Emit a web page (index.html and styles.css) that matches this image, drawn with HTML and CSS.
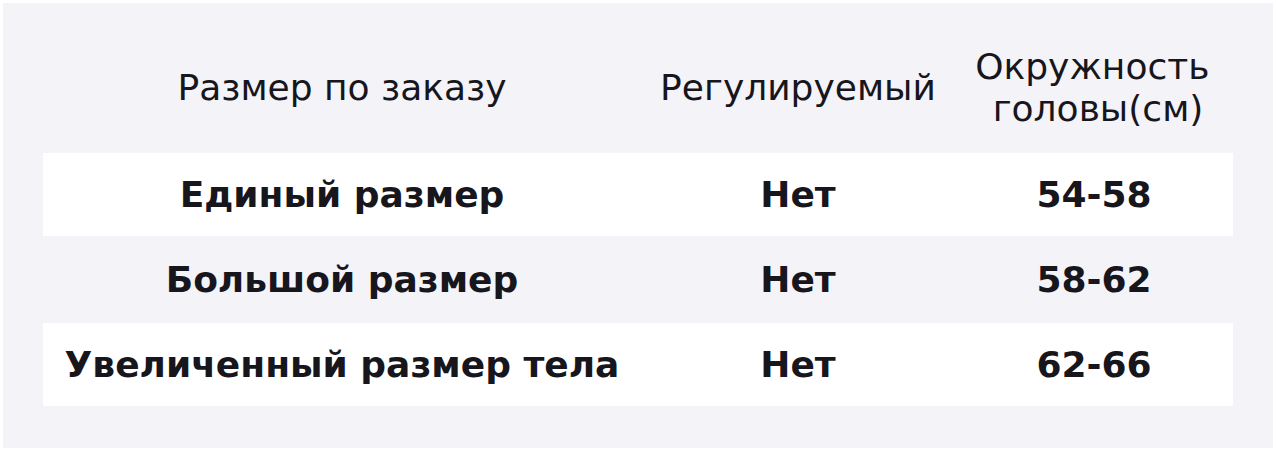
FILE: index.html
```html
<!DOCTYPE html>
<html lang="ru">
<head>
<meta charset="utf-8">
<link rel="stylesheet" href="styles.css">
</head>
<body>
<div class="panel">
  <div class="table">
    <div class="row head">
      <div class="cell">Размер по заказу</div>
      <div class="cell">Регулируемый</div>
      <div class="cell shift">Окружность&nbsp;<br>головы(см)</div>
    </div>
    <div class="row body odd">
      <div class="cell">Единый размер</div>
      <div class="cell">Нет</div>
      <div class="cell">54-58</div>
    </div>
    <div class="row body even">
      <div class="cell">Большой размер</div>
      <div class="cell">Нет</div>
      <div class="cell">58-62</div>
    </div>
    <div class="row body odd">
      <div class="cell">Увеличенный размер тела</div>
      <div class="cell">Нет</div>
      <div class="cell">62-66</div>
    </div>
  </div>
</div>
</body>
</html>
```

FILE: styles.css
```css
html, body {
  margin: 0;
  padding: 0;
  background: #ffffff;
}
body {
  font-family: "DejaVu Sans", sans-serif;
  color: #16161c;
}
.panel {
  margin: 3px;
  width: 1270px;
  height: 445px;
  box-sizing: border-box;
  background: #f4f3f8;
  padding: 0 40px 42px;
}
.table {
  display: flex;
  flex-direction: column;
}
.row {
  display: grid;
  grid-template-columns: 598px 314px 278px;
  align-items: center;
  text-align: center;
  font-size: 36px;
  line-height: 42px;
}
.head {
  padding: 43px 0 23px;
  font-weight: normal;
}
.shift {
  padding-left: 8px;
}
.body {
  font-weight: bold;
}
.odd {
  background: #ffffff;
  height: 83px;
}
.even {
  background: #f4f3f8;
  height: 87px;
}
```
